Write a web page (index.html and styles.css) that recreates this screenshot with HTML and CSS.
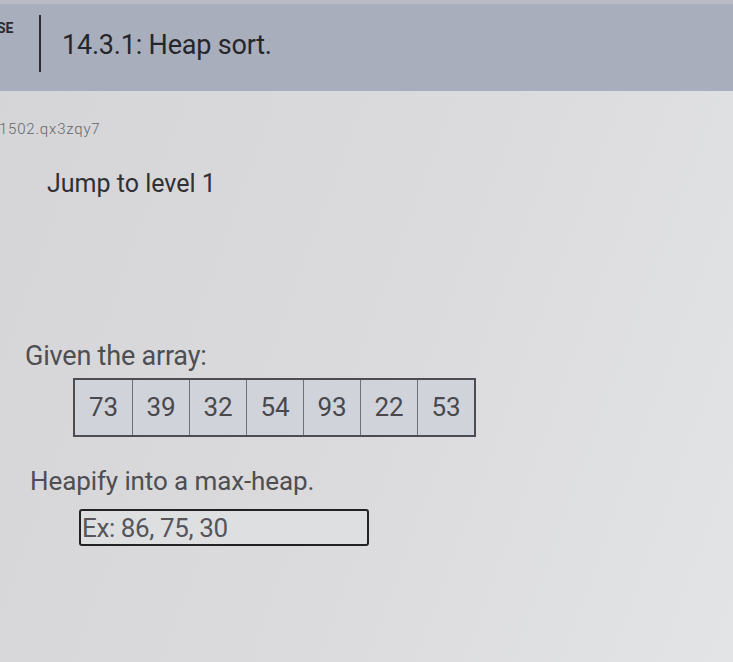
FILE: index.html
```html
<!DOCTYPE html>
<html>
<head>
<meta charset="utf-8">
<link rel="stylesheet" href="styles.css">
</head>
<body>
<header class="topbar">
  <span class="brand">SE</span>
  <span class="divider"></span>
  <h1 class="title">14.3.1: Heap sort.</h1>
</header>
<main class="content">
  <div class="code">1502.qx3zqy7</div>
  <div class="level">Jump to level 1</div>
  <div class="prompt given">Given the array:</div>
  <div class="array">
    <div class="cell">73</div>
    <div class="cell">39</div>
    <div class="cell">32</div>
    <div class="cell">54</div>
    <div class="cell">93</div>
    <div class="cell">22</div>
    <div class="cell">53</div>
  </div>
  <div class="prompt heapify">Heapify into a max-heap.</div>
  <input class="answer" type="text" placeholder="Ex: 86, 75, 30">
</main>
</body>
</html>
```
FILE: styles.css
```css
html, body {
  margin: 0;
  padding: 0;
}
body {
  width: 733px;
  height: 662px;
  overflow: hidden;
  background: linear-gradient(110deg, #d5d5d7 0%, #dbdbdd 55%, #e3e4e6 100%);
  font-family: Roboto, "Liberation Sans", sans-serif;
  color: #3a3a3e;
}
.topbar {
  height: 91px;
  box-sizing: border-box;
  background: #a9aebc;
  border-top: 4px solid #b8bbc5;
  display: flex;
  align-items: flex-start;
}
.brand {
  font-size: 14px;
  font-weight: bold;
  color: #2a2a30;
  margin-left: -3px;
  margin-top: 16px;
  width: 42px;
}
.divider {
  width: 2px;
  height: 57px;
  background: #2b2b30;
  margin-top: 11px;
}
.title {
  margin: 25px 0 0 21px;
  font-size: 27px;
  font-weight: normal;
  color: #25262c;
  letter-spacing: -0.2px;
}
.content {
  display: flex;
  flex-direction: column;
  align-items: flex-start;
}
.code {
  margin-top: 29px;
  margin-left: -1px;
  font-size: 15px;
  font-weight: 300;
  color: #66666b;
  letter-spacing: 0.8px;
}
.level {
  margin-top: 31px;
  margin-left: 47px;
  font-size: 25px;
  color: #303035;
}
.prompt {
  color: #4e4e53;
  letter-spacing: -0.2px;
}
.given {
  margin-top: 142px;
  margin-left: 25px;
  font-size: 27px;
}
.array {
  display: flex;
  margin-top: 6px;
  margin-left: 73px;
  border: 2px solid #4c4c52;
  background: #d1d3da;
}
.cell {
  width: 57px;
  height: 55px;
  display: flex;
  align-items: center;
  justify-content: center;
  font-size: 26px;
  color: #48484d;
  border-left: 1.5px solid #707076;
  padding-bottom: 2px;
  box-sizing: border-box;
}
.cell:first-child {
  border-left: none;
}
.heapify {
  margin-top: 29px;
  margin-left: 30px;
  font-size: 26px;
  letter-spacing: -0.1px;
}
.answer {
  margin-top: 13px;
  margin-left: 79px;
  width: 290px;
  height: 37px;
  box-sizing: border-box;
  border: 2.5px solid #222226;
  border-radius: 3px;
  background: #dedfe1;
  font-family: Roboto, "Liberation Sans", sans-serif;
  font-size: 26px;
  padding: 0 0 0 1px;
  outline: none;
}
.answer::placeholder {
  color: #55555a;
  letter-spacing: -0.4px;
}
```
